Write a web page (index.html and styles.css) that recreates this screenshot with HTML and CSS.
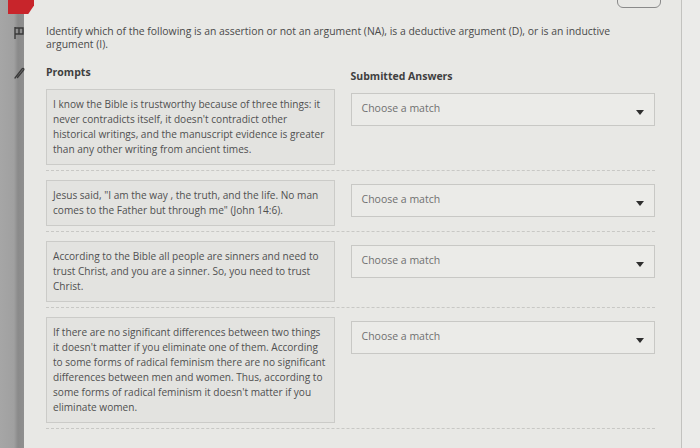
FILE: index.html
```html
<!DOCTYPE html>
<html>
<head>
<meta charset="utf-8">
<link rel="stylesheet" href="styles.css">
</head>
<body>
<div class="app">
  <div class="sidebar">
    <div class="redtab"></div>
    <svg class="icon icon-flag" width="12" height="14" viewBox="0 0 12 14">
      <path d="M2 1 V13 M2 2 H10 V8 H2 M6 2 V8" fill="none" stroke="#3a3a3a" stroke-width="1.4"/>
    </svg>
    <svg class="icon icon-clip" width="12" height="14" viewBox="0 0 12 14">
      <path d="M2 12 L9 3 C10 1.8 11.5 2.8 10.6 4 L4.5 11.5" fill="none" stroke="#3a3a3a" stroke-width="1.3" stroke-linecap="round"/>
    </svg>
  </div>
  <div class="panel">
    <div class="topbtn"></div>
    <p class="title">Identify which of the following is an assertion or not an argument (NA), is a deductive argument (D), or is an inductive argument (I).</p>
    <div class="heads">
      <div class="head head-left">Prompts</div>
      <div class="head head-right">Submitted Answers</div>
    </div>
    <div class="row first">
      <div class="prompt">I know the Bible is trustworthy because of three things: it never contradicts itself, it doesn't contradict other historical writings, and the manuscript evidence is greater than any other writing from ancient times.</div>
      <div class="select"><span>Choose a match</span><i class="arrow"></i></div>
    </div>
    <div class="row">
      <div class="prompt">Jesus said, "I am the way , the truth, and the life. No man comes to the Father but through me" (John 14:6).</div>
      <div class="select"><span>Choose a match</span><i class="arrow"></i></div>
    </div>
    <div class="row">
      <div class="prompt">According to the Bible all people are sinners and need to trust Christ, and you are a sinner. So, you need to trust Christ.</div>
      <div class="select"><span>Choose a match</span><i class="arrow"></i></div>
    </div>
    <div class="row">
      <div class="prompt">If there are no significant differences between two things it doesn't matter if you eliminate one of them. According to some forms of radical feminism there are no significant differences between men and women. Thus, according to some forms of radical feminism it doesn't matter if you eliminate women.</div>
      <div class="select"><span>Choose a match</span><i class="arrow"></i></div>
    </div>
  </div>
</div>
</body>
</html>
```
FILE: styles.css
```css
html, body {
  margin: 0;
  padding: 0;
}
body {
  width: 700px;
  height: 448px;
  overflow: hidden;
  background: #ebebe9;
  font-family: "Open Sans", "Liberation Sans", sans-serif;
  color: #4e4e4e;
}
.app {
  display: flex;
  height: 448px;
}
.sidebar {
  position: relative;
  width: 24px;
  flex: none;
  background: linear-gradient(90deg, #a6a6a6 0, #a0a0a0 14px, #8a8a8a 18px, #8f8f8f 24px);
}
.redtab {
  position: absolute;
  left: 8px;
  top: 0;
  width: 26px;
  height: 14px;
  background: #c8252b;
  clip-path: polygon(0 0, 100% 0, 100% 40%, 78% 100%, 0 100%);
  z-index: 2;
}
.icon {
  position: absolute;
  left: 13px;
  z-index: 2;
}
.icon-flag { top: 26px; }
.icon-clip { top: 66px; }
.panel {
  position: relative;
  flex: none;
  width: 658px;
  height: 448px;
  box-sizing: border-box;
  padding: 25px 0 0 22px;
  background: #e8e8e5;
  border-right: 1px solid #c2c2bf;
}
.topbtn {
  position: absolute;
  right: 20px;
  top: -10px;
  width: 42px;
  height: 16px;
  border: 1px solid #8a8a8a;
  border-radius: 6px;
}
.title {
  margin: 0;
  width: 600px;
  font-size: 10.4px;
  line-height: 13px;
  color: #4a4a4a;
}
.heads {
  display: flex;
  gap: 16px;
  margin-top: 14px;
  width: 609px;
}
.head {
  font-weight: 700;
  font-size: 10.5px;
  line-height: 14px;
  color: #3f3f3f;
}
.head-left { width: 289px; }
.head-right { width: 305px; padding-top: 4px; }
.row {
  display: flex;
  align-items: flex-start;
  gap: 16px;
  width: 609px;
  padding: 9px 0 5px;
  border-bottom: 1px dashed #c8c8c5;
}
.row.first { padding-top: 6px; }
.prompt {
  width: 289px;
  box-sizing: border-box;
  padding: 7px 8px 7px 6px;
  border: 1px solid #cbcbc8;
  background: #e3e3e0;
  font-size: 10.1px;
  line-height: 15px;
  color: #505050;
}
.select {
  position: relative;
  width: 305px;
  height: 33px;
  margin-top: 4px;
  box-sizing: border-box;
  border: 1px solid #c8c8c5;
  background: #ebebe8;
  padding: 6px 10px;
  font-size: 10.5px;
  line-height: 16px;
  color: #707070;
}
.arrow {
  position: absolute;
  right: 10px;
  top: 16px;
  width: 0;
  height: 0;
  border-left: 4px solid transparent;
  border-right: 4px solid transparent;
  border-top: 5px solid #2e2e2e;
}
```
